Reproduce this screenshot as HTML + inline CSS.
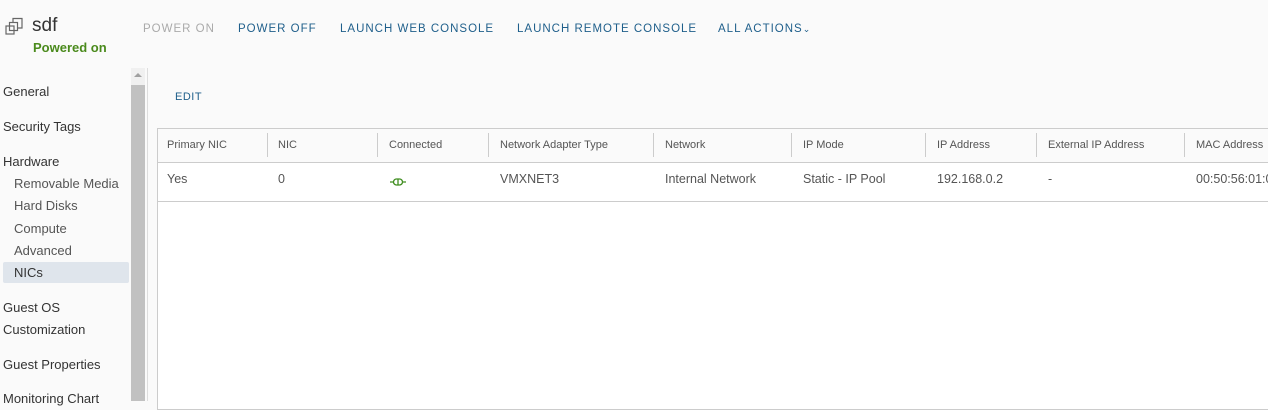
<!DOCTYPE html>
<html><head><style>
body{margin:0;width:1268px;height:401px;overflow:hidden;background:#fafafa;font-family:"Liberation Sans",sans-serif;position:relative;color:#333}
.a{position:absolute;white-space:nowrap}
.act{font-size:11.5px;letter-spacing:1px;color:#1f5f8b;top:23px}
.nav{font-size:13px;color:#333;left:3px}
.sub{font-size:13px;color:#555;left:14px}
.h{font-size:11px;color:#555;top:139px}
.c{font-size:12.5px;color:#555;top:172px}
.sep{position:absolute;top:133px;width:1px;height:24px;background:#ccc}
</style></head><body>
<svg class="a" style="left:5px;top:17px" width="19" height="20" viewBox="0 0 19 20"><g fill="none" stroke="#666" stroke-width="1.2"><rect x="1" y="9" width="8" height="8"/><rect x="4.5" y="5.5" width="8" height="8"/><path d="M8 5.5V1.5h9V11h-4.5"/></g></svg>
<div class="a" style="left:32px;top:15px;font-size:19px;color:#333">sdf</div>
<div class="a" style="left:33px;top:40px;font-size:13px;color:#4a8a1c;font-weight:bold">Powered on</div>
<div class="a act" style="left:143px;color:#aaa">POWER ON</div>
<div class="a act" style="left:238px">POWER OFF</div>
<div class="a act" style="left:340px">LAUNCH WEB CONSOLE</div>
<div class="a act" style="left:517px">LAUNCH REMOTE CONSOLE</div>
<div class="a act" style="left:718px">ALL ACTIONS<span style="font-size:9px">&#8964;</span></div>

<div class="a nav" style="top:84px">General</div>
<div class="a nav" style="top:119px">Security Tags</div>
<div class="a nav" style="top:154px">Hardware</div>
<div class="a sub" style="top:176px">Removable Media</div>
<div class="a sub" style="top:198px">Hard Disks</div>
<div class="a sub" style="top:221px">Compute</div>
<div class="a sub" style="top:243px">Advanced</div>
<div class="a" style="left:3px;top:262px;width:126px;height:21px;background:#dfe5ec;border-radius:2px"></div>
<div class="a sub" style="top:265px;color:#333">NICs</div>
<div class="a nav" style="top:300px">Guest OS</div>
<div class="a nav" style="top:322px">Customization</div>
<div class="a nav" style="top:357px">Guest Properties</div>
<div class="a nav" style="top:391px">Monitoring Chart</div>

<div class="a" style="left:131px;top:68px;width:14px;height:333px;background:#f0f0f0"></div>
<div class="a" style="left:131px;top:85px;width:14px;height:316px;background:#c1c1c1"></div>
<div class="a" style="left:134px;top:73px;width:0;height:0;border-left:4px solid transparent;border-right:4px solid transparent;border-bottom:4px solid #a0a0a0"></div>
<div class="a" style="left:147px;top:68px;width:1px;height:333px;background:#ddd"></div>

<div class="a" style="left:175px;top:91px;font-size:11px;letter-spacing:.5px;color:#1f5f8b">EDIT</div>

<div class="a" style="left:157px;top:128px;width:1120px;height:280px;background:#fff;border:1px solid #ccc"></div>
<div class="a" style="left:158px;top:129px;width:1110px;height:33px;background:#fafafa;border-bottom:1px solid #ccc"></div>
<div class="a" style="left:158px;top:201px;width:1110px;height:1px;background:#ccc"></div>
<div class="sep" style="left:267px"></div><div class="sep" style="left:377px"></div><div class="sep" style="left:488px"></div><div class="sep" style="left:653px"></div><div class="sep" style="left:791px"></div><div class="sep" style="left:925px"></div><div class="sep" style="left:1036px"></div><div class="sep" style="left:1184px"></div>
<div class="a h" style="left:167px">Primary NIC</div>
<div class="a h" style="left:278px">NIC</div>
<div class="a h" style="left:389px">Connected</div>
<div class="a h" style="left:500px">Network Adapter Type</div>
<div class="a h" style="left:665px">Network</div>
<div class="a h" style="left:803px">IP Mode</div>
<div class="a h" style="left:937px">IP Address</div>
<div class="a h" style="left:1048px">External IP Address</div>
<div class="a h" style="left:1196px">MAC Address</div>
<div class="a c" style="left:167px">Yes</div>
<div class="a c" style="left:278px">0</div>
<svg class="a" style="left:389px;top:178px" width="18" height="8" viewBox="0 0 18 8"><g fill="none" stroke="#3f8d1f" stroke-width="1.3"><path d="M1 4h3M14 4h3"/><rect x="4.5" y="1" width="9" height="6" rx="3"/><path d="M9 1v6"/></g></svg>
<div class="a c" style="left:500px">VMXNET3</div>
<div class="a c" style="left:665px">Internal Network</div>
<div class="a c" style="left:803px">Static - IP Pool</div>
<div class="a c" style="left:937px">192.168.0.2</div>
<div class="a c" style="left:1048px">-</div>
<div class="a c" style="left:1196px">00:50:56:01:0</div>
</body></html>
